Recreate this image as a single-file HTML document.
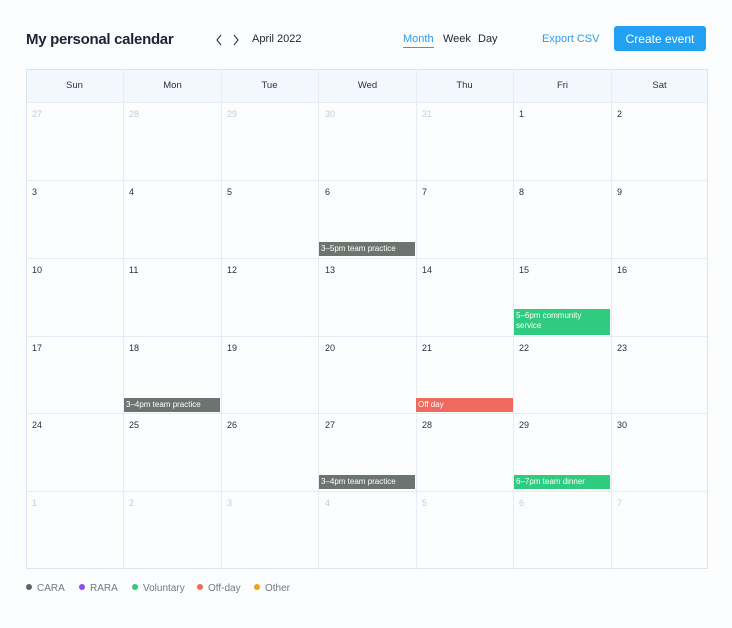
<!DOCTYPE html>
<html><head><style>
body{margin:0;width:732px;height:628px;background:#fcfdfe;font-family:"Liberation Sans",sans-serif;position:relative;overflow:hidden;color:#1e2533}
.a{position:absolute}
.title{left:26px;top:31px;font-size:15px;font-weight:bold;color:#1f2433;letter-spacing:-0.3px}
.nav{top:33px;font-size:11px}
.grid{left:26px;top:69px;width:682px;height:500px;border:1px solid #d6e8f7;box-sizing:border-box}
.hd{top:69px;height:33px;background:#f2f8fe}
.vl{width:1px;background:#e1eef9}
.hl{height:1px;background:#e1eef9;left:26px;width:682px}
.dn{font-size:9.5px;color:#2a3040;text-align:center;width:97px;top:80px}
.n{font-size:9px;color:#2a3040}
.g{color:#c7ccd4}
.ev{font-size:8px;color:#fff;padding:2px 2px;box-sizing:border-box;line-height:10px}
.dot{width:6px;height:6px;border-radius:50%;display:inline-block;margin-right:5px;vertical-align:1px}
.lg{top:583px;font-size:10px;color:#727a86}
</style></head><body>
<div class="a title">My personal calendar</div>
<svg class="a" style="left:214px;top:33px" width="30" height="14" viewBox="0 0 30 14"><path d="M7 2 L3 7 L7 12" stroke="#333" stroke-width="1.1" fill="none"/><path d="M20 2 L24 7 L20 12" stroke="#333" stroke-width="1.1" fill="none"/></svg>
<div class="a nav" style="left:252px">April 2022</div>
<div class="a nav" style="left:403px;color:#2d9cf0;border-bottom:1.5px solid #2d9cf0;padding-bottom:2px">Month</div>
<div class="a nav" style="left:443px">Week</div>
<div class="a nav" style="left:478px">Day</div>
<div class="a nav" style="left:542px;color:#2d9cf0">Export CSV</div>
<div class="a" style="left:614px;top:26px;width:92px;height:25px;background:#22a0f4;border-radius:3px;color:#fff;font-size:12px;text-align:center;line-height:26px">Create event</div>
<div class="a hd" style="left:26px;width:682px"></div>
<div class="a grid"></div>
<div class="a dn" style="left:26px">Sun</div><div class="a dn" style="left:124px">Mon</div><div class="a dn" style="left:221px">Tue</div><div class="a dn" style="left:319px">Wed</div><div class="a dn" style="left:416px">Thu</div><div class="a dn" style="left:514px">Fri</div><div class="a dn" style="left:611px">Sat</div>
<div class="a vl" style="left:123px;top:69px;height:500px"></div><div class="a vl" style="left:221px;top:69px;height:500px"></div><div class="a vl" style="left:318px;top:69px;height:500px"></div><div class="a vl" style="left:416px;top:69px;height:500px"></div><div class="a vl" style="left:513px;top:69px;height:500px"></div><div class="a vl" style="left:611px;top:69px;height:500px"></div>
<div class="a hl" style="top:102px"></div><div class="a hl" style="top:180px"></div><div class="a hl" style="top:258px"></div><div class="a hl" style="top:336px"></div><div class="a hl" style="top:413px"></div><div class="a hl" style="top:491px"></div>
<div class="a n g" style="left:32px;top:109px">27</div><div class="a n g" style="left:129px;top:109px">28</div><div class="a n g" style="left:227px;top:109px">29</div><div class="a n g" style="left:325px;top:109px">30</div><div class="a n g" style="left:422px;top:109px">31</div><div class="a n" style="left:519px;top:109px">1</div><div class="a n" style="left:617px;top:109px">2</div>
<div class="a n" style="left:32px;top:187px">3</div><div class="a n" style="left:129px;top:187px">4</div><div class="a n" style="left:227px;top:187px">5</div><div class="a n" style="left:325px;top:187px">6</div><div class="a n" style="left:422px;top:187px">7</div><div class="a n" style="left:519px;top:187px">8</div><div class="a n" style="left:617px;top:187px">9</div>
<div class="a n" style="left:32px;top:265px">10</div><div class="a n" style="left:129px;top:265px">11</div><div class="a n" style="left:227px;top:265px">12</div><div class="a n" style="left:325px;top:265px">13</div><div class="a n" style="left:422px;top:265px">14</div><div class="a n" style="left:519px;top:265px">15</div><div class="a n" style="left:617px;top:265px">16</div>
<div class="a n" style="left:32px;top:343px">17</div><div class="a n" style="left:129px;top:343px">18</div><div class="a n" style="left:227px;top:343px">19</div><div class="a n" style="left:325px;top:343px">20</div><div class="a n" style="left:422px;top:343px">21</div><div class="a n" style="left:519px;top:343px">22</div><div class="a n" style="left:617px;top:343px">23</div>
<div class="a n" style="left:32px;top:420px">24</div><div class="a n" style="left:129px;top:420px">25</div><div class="a n" style="left:227px;top:420px">26</div><div class="a n" style="left:325px;top:420px">27</div><div class="a n" style="left:422px;top:420px">28</div><div class="a n" style="left:519px;top:420px">29</div><div class="a n" style="left:617px;top:420px">30</div>
<div class="a n g" style="left:32px;top:498px">1</div><div class="a n g" style="left:129px;top:498px">2</div><div class="a n g" style="left:227px;top:498px">3</div><div class="a n g" style="left:325px;top:498px">4</div><div class="a n g" style="left:422px;top:498px">5</div><div class="a n g" style="left:519px;top:498px">6</div><div class="a n g" style="left:617px;top:498px">7</div>
<div class="a ev" style="left:319px;top:242px;width:96px;height:14px;background:#6c746f">3–5pm team practice</div>
<div class="a ev" style="left:514px;top:309px;width:96px;height:26px;background:#2fcb7f">5–6pm community service</div>
<div class="a ev" style="left:124px;top:398px;width:96px;height:14px;background:#6c746f">3–4pm team practice</div>
<div class="a ev" style="left:416px;top:398px;width:97px;height:14px;background:#ef6a5e">Off day</div>
<div class="a ev" style="left:319px;top:475px;width:96px;height:14px;background:#6c746f">3–4pm team practice</div>
<div class="a ev" style="left:514px;top:475px;width:96px;height:14px;background:#2fcb7f">6–7pm team dinner</div>
<div class="a lg" style="left:26px"><span class="dot" style="background:#5f6662"></span>CARA</div>
<div class="a lg" style="left:79px"><span class="dot" style="background:#8b4cf6"></span>RARA</div>
<div class="a lg" style="left:132px"><span class="dot" style="background:#2fcb7f"></span>Voluntary</div>
<div class="a lg" style="left:197px"><span class="dot" style="background:#ef6a5e"></span>Off-day</div>
<div class="a lg" style="left:254px"><span class="dot" style="background:#eea21c"></span>Other</div>
</body></html>
